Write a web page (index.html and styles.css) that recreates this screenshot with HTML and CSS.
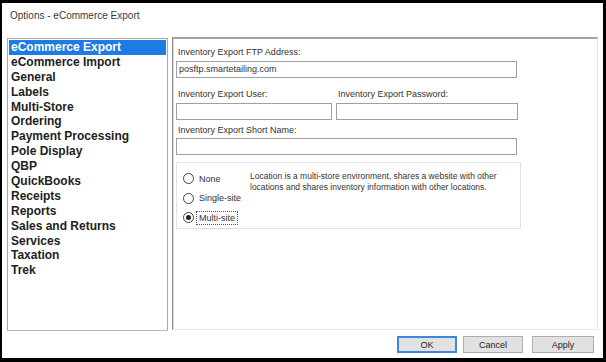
FILE: index.html
```html
<!DOCTYPE html>
<html lang="en">
  <head>
    <meta charset="UTF-8" />
    <title>Options - eCommerce Export</title>
    <link rel="stylesheet" href="styles.css">
  </head>
  <body>
    <div class="dialog">
      <div class="title">Options - eCommerce Export</div>

      <div class="main">
        <ul class="category-list">
          <li class="selected">eCommerce Export</li>
          <li>eCommerce Import</li>
          <li>General</li>
          <li>Labels</li>
          <li>Multi-Store</li>
          <li>Ordering</li>
          <li>Payment Processing</li>
          <li>Pole Display</li>
          <li>QBP</li>
          <li>QuickBooks</li>
          <li>Receipts</li>
          <li>Reports</li>
          <li>Sales and Returns</li>
          <li>Services</li>
          <li>Taxation</li>
          <li>Trek</li>
        </ul>

        <div class="panel">
          <div class="field first">
            <label>Inventory Export FTP Address:</label>
            <div class="input wide">posftp.smartetailing.com</div>
          </div>

          <div class="field-row">
            <div class="field">
              <label>Inventory Export User:</label>
              <div class="input user"></div>
            </div>
            <div class="field">
              <label>Inventory Export Password:</label>
              <div class="input password"></div>
            </div>
          </div>

          <div class="field short">
            <label>Inventory Export Short Name:</label>
            <div class="input wide"></div>
          </div>

          <div class="site-box">
            <div class="radios">
              <div class="radio"><span class="circle"></span><span>None</span></div>
              <div class="radio"><span class="circle"></span><span>Single-site</span></div>
              <div class="radio"><span class="circle checked"></span><span class="focus">Multi-site</span></div>
            </div>
            <p class="site-note">Location is a multi-store environment, shares a website with other locations and shares inventory information with other locations.</p>
          </div>
        </div>
      </div>

      <div class="buttons">
        <button class="btn default">OK</button>
        <button class="btn">Cancel</button>
        <button class="btn apply">Apply</button>
      </div>
    </div>
  </body>
</html>
```

FILE: styles.css
```css
html, body {
  margin: 0;
  padding: 0;
}

body {
  width: 606px;
  height: 362px;
  background-color: #000;
  padding: 3px 3px 4px 2px;
  box-sizing: border-box;
  font-family: "Liberation Sans", Arial, sans-serif;
  color: #333;
}

.dialog {
  background-color: #fff;
  height: 355px;
}

.title {
  height: 35px;
  line-height: 26px;
  padding-left: 8px;
  font-size: 10px;
  color: #3a3a3a;
}

.main {
  display: flex;
  align-items: flex-start;
}

.category-list {
  list-style: none;
  margin: 0 0 0 5px;
  padding: 1px 1px;
  width: 157px;
  height: 289px;
  border: 1px solid #a8a8a8;
  border-bottom-color: #b8b8b8;
}

.category-list li {
  height: 14.9px;
  line-height: 14px;
  padding-left: 2px;
  font-size: 12px;
  font-weight: bold;
  color: #1e1e1e;
  white-space: nowrap;
}

.category-list li.selected {
  background-color: #1f7be4;
  color: #fff;
}

.panel {
  margin: -1px 0 0 4px;
  width: 421px;
  height: 283px;
  border-top: 2px solid #a3a3a3;
  border-left: 1px solid #8c8c8c;
  border-right: 1px solid #e6e6e6;
  border-bottom: 1px solid #ececec;
  box-shadow: inset 1px 0 0 #d8d8d8;
  padding: 7px 0 0 3px;
}

.field label {
  display: block;
  font-size: 9px;
  line-height: 12px;
  height: 12px;
  padding: 0 0 3px 2px;
  color: #333;
}

.field.short label {
  padding-bottom: 2px;
}

.input {
  height: 15px;
  border: 1px solid #a0a0a0;
  font-size: 9px;
  line-height: 15px;
  padding-left: 2px;
  margin-bottom: 4px;
  color: #333;
}

.field.first .input {
  margin-bottom: 10px;
}

.input.wide {
  width: 337px;
}

.field-row {
  display: flex;
  gap: 4px;
}

.input.user {
  width: 152px;
}

.input.password {
  width: 178px;
}

.site-box {
  display: flex;
  width: 343px;
  height: 65px;
  border: 1px solid #e2e2e2;
  margin-top: 7px;
}

.radios {
  padding: 6px 0 0 6px;
  width: 67px;
}

.radio {
  display: flex;
  align-items: center;
  height: 19.5px;
  font-size: 9px;
}

.circle {
  width: 9px;
  height: 9px;
  border: 1px solid #444;
  border-radius: 50%;
  margin-right: 5px;
  position: relative;
}

.circle.checked::after {
  content: "";
  position: absolute;
  left: 2px;
  top: 2px;
  width: 5px;
  height: 5px;
  border-radius: 50%;
  background-color: #222;
}

.focus {
  border: 1px dotted #555;
  padding: 1px 2px;
  margin-left: -3px;
}

.site-note {
  margin: 0;
  padding: 8px 0 0 0;
  width: 270px;
  font-size: 8.5px;
  line-height: 11px;
  color: #333;
}

.buttons {
  display: flex;
  justify-content: flex-end;
  padding: 5px 9px 0 0;
}

.btn {
  font-family: "Liberation Sans", Arial, sans-serif;
  font-size: 9px;
  height: 17px;
  width: 60px;
  padding: 0;
  margin-left: 6px;
  background-color: #e1e1e1;
  border: 1px solid #adadad;
  color: #222;
}

.btn.default {
  border: 2px solid #3d86d9;
}

.btn.apply {
  margin-left: 9px;
  width: 62px;
}
```
